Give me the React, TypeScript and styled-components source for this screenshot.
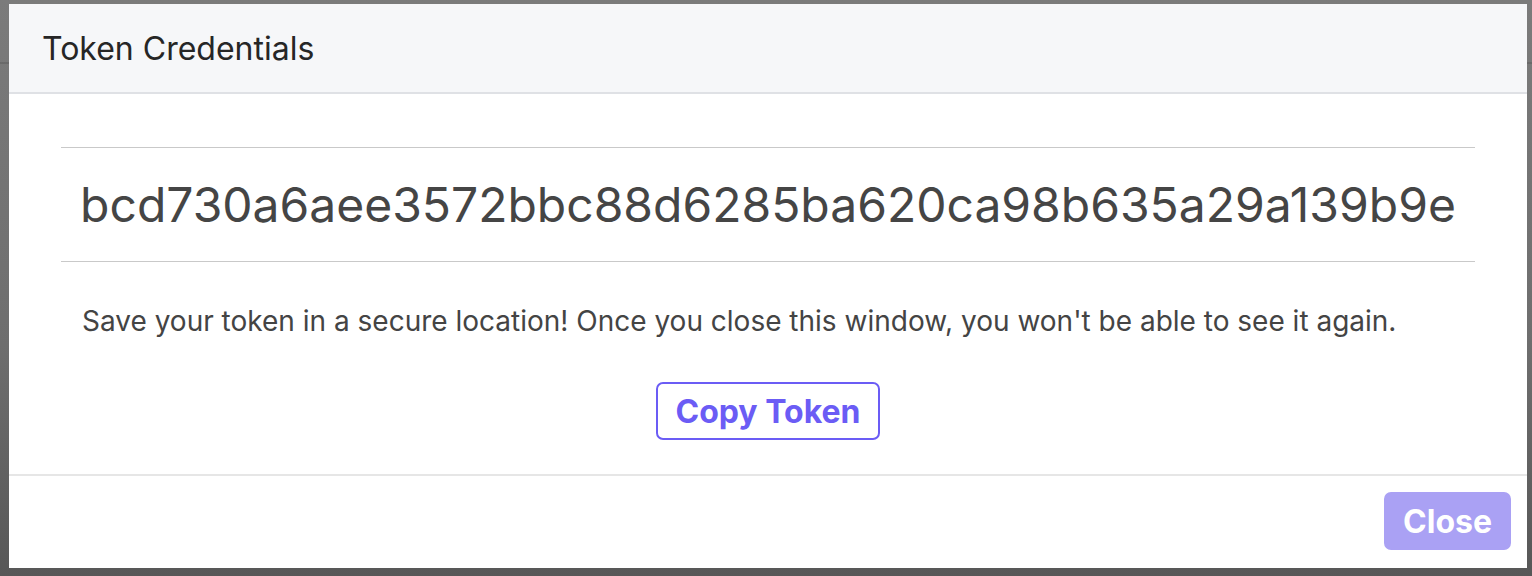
import styled, { createGlobalStyle } from 'styled-components'

const GlobalStyle = createGlobalStyle`
  html, body {
    margin: 0;
    padding: 0;
  }

  body {
    font-family: Inter, "Noto Sans", "Liberation Sans", sans-serif;
    -webkit-font-smoothing: antialiased;
  }
`

const Backdrop = styled.div`
  box-sizing: border-box;
  min-height: 576px;
  padding: 4px 5px 8px 9px;
  background:
    linear-gradient(to bottom, transparent 62px, rgba(0, 0, 0, 0.12) 62px, rgba(0, 0, 0, 0.12) 64px, transparent 64px),
    linear-gradient(to bottom, #7b7b7b 0%, #6e6e6e 60%, #575757 100%);
`

const Modal = styled.section`
  display: flex;
  flex-direction: column;
  height: 564px;
  background: #ffffff;
  overflow: hidden;
`

const Header = styled.header`
  display: flex;
  align-items: center;
  height: 88px;
  padding: 0 33px;
  background: #f6f7f9;
  border-bottom: 2px solid #dfe1e5;
`

const Title = styled.h2`
  margin: 0;
  font-size: 32px;
  font-weight: 400;
  color: #262626;
`

const Body = styled.div`
  flex: 1;
  display: flex;
  flex-direction: column;
  align-items: center;
  padding: 53px 52px 0;
`

const TokenBox = styled.div`
  align-self: stretch;
  display: flex;
  align-items: center;
  justify-content: center;
  height: 113px;
  border-top: 1px solid #c9c9c9;
  border-bottom: 1px solid #c9c9c9;
  font-size: 48px;
  color: #454545;
`

const Notice = styled.p`
  align-self: stretch;
  margin: 42px 0 0;
  padding-left: 21px;
  font-size: 28px;
  color: #444444;
`

const Button = styled.button<{ $variant: 'outline' | 'solid' }>`
  box-sizing: border-box;
  display: inline-flex;
  align-items: center;
  justify-content: center;
  height: 58px;
  padding: 0 17px;
  border-radius: 7px;
  font-family: inherit;
  font-size: 32px;
  font-weight: 700;
  cursor: pointer;
  border: 2px solid ${p => (p.$variant === 'outline' ? '#6b5cf5' : '#aaa1f4')};
  background: ${p => (p.$variant === 'outline' ? '#ffffff' : '#aaa1f4')};
  color: ${p => (p.$variant === 'outline' ? '#6b5cf5' : '#ffffff')};
`

const Actions = styled.div`
  display: flex;
  margin-top: 44px;
`

const Footer = styled.footer`
  display: flex;
  justify-content: flex-end;
  padding: 16px 16px 18px;
  border-top: 2px solid #e6e6e6;
`

export default function App() {
  return (
    <>
      <GlobalStyle />
      <Backdrop>
        <Modal role="dialog" aria-labelledby="token-title">
          <Header>
            <Title id="token-title">Token Credentials</Title>
          </Header>
          <Body>
            <TokenBox>bcd730a6aee3572bbc88d6285ba620ca98b635a29a139b9e</TokenBox>
            <Notice>
              Save your token in a secure location! Once you close this window, you won't be able to see it again.
            </Notice>
            <Actions>
              <Button $variant="outline">Copy Token</Button>
            </Actions>
          </Body>
          <Footer>
            <Button $variant="solid">Close</Button>
          </Footer>
        </Modal>
      </Backdrop>
    </>
  )
}
